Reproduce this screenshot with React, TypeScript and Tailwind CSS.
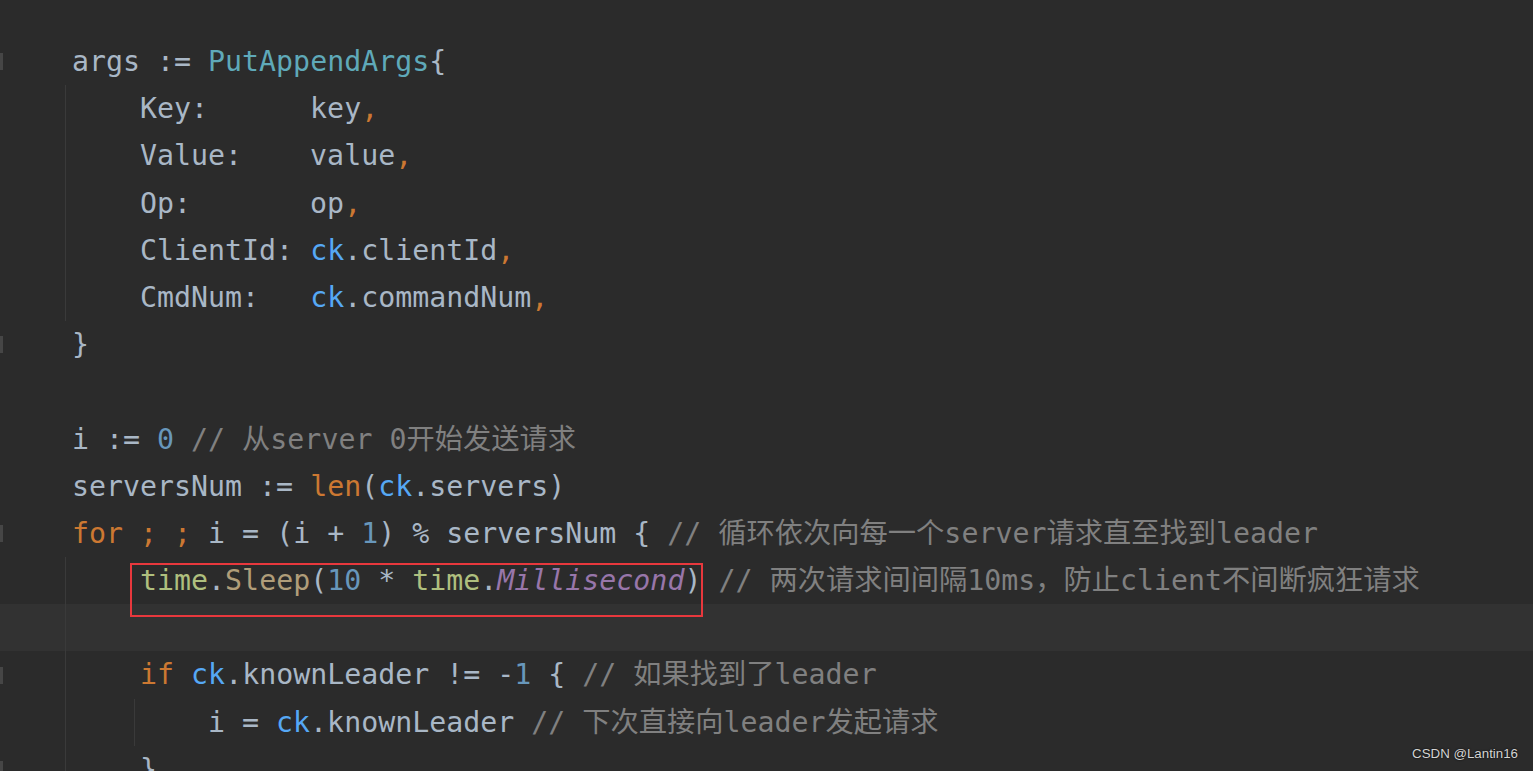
import React from "react";

type Tok = [string, string];

// colours of the Darcula-like theme
const DEF = "text-[#a9b7c6]";
const KW = "text-[#cc7832]";
const TYPE = "text-[#5fa9b9]";
const VAR = "text-[#56a8f5]";
const NUM = "text-[#6897bb]";
const CMT = "text-[#808080] leading-[28px]";
const PKG = "text-[#afbf7e]";
const FN = "text-[#b09d79]";
const CONST = "text-[#9876aa] italic";

interface Line {
  level: number;
  fold?: boolean;
  active?: boolean;
  boxed?: boolean;
  pre?: string;
  toks: Tok[];
  after?: Tok[];
}

const lines: Line[] = [
  { level: 0, fold: true, toks: [[DEF, "args := "], [TYPE, "PutAppendArgs"], [DEF, "{"]] },
  { level: 1, toks: [[DEF, "    Key:      key"], [KW, ","]] },
  { level: 1, toks: [[DEF, "    Value:    value"], [KW, ","]] },
  { level: 1, toks: [[DEF, "    Op:       op"], [KW, ","]] },
  { level: 1, toks: [[DEF, "    ClientId: "], [VAR, "ck"], [DEF, ".clientId"], [KW, ","]] },
  { level: 1, toks: [[DEF, "    CmdNum:   "], [VAR, "ck"], [DEF, ".commandNum"], [KW, ","]] },
  { level: 0, fold: true, toks: [[DEF, "}"]] },
  { level: 0, toks: [] },
  { level: 0, toks: [[DEF, "i := "], [NUM, "0"], [DEF, " "], [CMT, "// 从server 0开始发送请求"]] },
  { level: 0, toks: [[DEF, "serversNum := "], [KW, "len"], [DEF, "("], [VAR, "ck"], [DEF, ".servers)"]] },
  {
    level: 0,
    fold: true,
    toks: [
      [KW, "for"], [DEF, " "], [KW, ";"], [DEF, " "], [KW, ";"], [DEF, " i = (i + "], [NUM, "1"],
      [DEF, ") % serversNum { "], [CMT, "// 循环依次向每一个server请求直至找到leader"],
    ],
  },
  {
    level: 1,
    boxed: true,
    pre: "    ",
    toks: [
      [PKG, "time"], [DEF, "."], [FN, "Sleep"], [DEF, "("], [NUM, "10"], [DEF, " * "], [PKG, "time"],
      [DEF, "."], [CONST, "Millisecond"], [DEF, ")"],
    ],
    after: [[DEF, " "], [CMT, "// 两次请求间间隔10ms，防止client不间断疯狂请求"]],
  },
  { level: 1, active: true, toks: [] },
  {
    level: 1,
    fold: true,
    toks: [
      [DEF, "    "], [KW, "if"], [DEF, " "], [VAR, "ck"], [DEF, ".knownLeader != -"], [NUM, "1"],
      [DEF, " { "], [CMT, "// 如果找到了leader"],
    ],
  },
  { level: 2, toks: [[DEF, "    i = "], [VAR, "ck"], [DEF, ".knownLeader "], [CMT, "// 下次直接向leader发起请求"]] },
  { level: 1, fold: true, toks: [[DEF, "    }"]] },
];

const Toks = ({ toks }: { toks: Tok[] }) => (
  <>
    {toks.map(([c, t], i) => (
      <span key={i} className={c}>
        {t}
      </span>
    ))}
  </>
);

const Row = ({ line }: { line: Line }) => (
  <div className={`flex h-[47.2px] leading-[47.2px] whitespace-pre ${line.active ? "bg-[#323232]" : ""}`}>
    <div className="flex w-[65px] shrink-0 items-center">
      {line.fold && <div className="h-[17px] w-[3px] bg-[#464646]" />}
    </div>
    {line.level >= 1 ? (
      <div className="w-[7px] shrink-0 border-l border-[#3a3a3a]" />
    ) : (
      <div className="w-[7px] shrink-0" />
    )}
    {line.level >= 2 && (
      <>
        <div className="w-[62px] shrink-0" />
        <div className="w-[6px] shrink-0 border-l border-[#3a3a3a]" />
      </>
    )}
    <div className={DEF}>
      {line.boxed ? (
        <>
          {line.pre}
          <span className="relative inline-block">
            <Toks toks={line.toks} />
            <span className="absolute -left-[10px] -right-[2px] top-[6px] h-[54px] border-2 border-[#e8383d]" />
          </span>
          <Toks toks={line.after ?? []} />
        </>
      ) : (
        <Toks toks={line.toks} />
      )}
    </div>
  </div>
);

export default function App() {
  return (
    <div className="relative h-screen w-full overflow-hidden bg-[#2b2b2b] pt-[38px] font-['DejaVu_Sans_Mono','Noto_Sans_CJK_SC',monospace] text-[28.25px]">
      {lines.map((l, i) => (
        <Row key={i} line={l} />
      ))}
      <div className="absolute bottom-[7px] right-[15px] font-['Liberation_Sans',Arial,sans-serif] text-[13.3px] text-[#d4d4d4] [text-shadow:0_0_2px_#000]">
        CSDN @Lantin16
      </div>
    </div>
  );
}
